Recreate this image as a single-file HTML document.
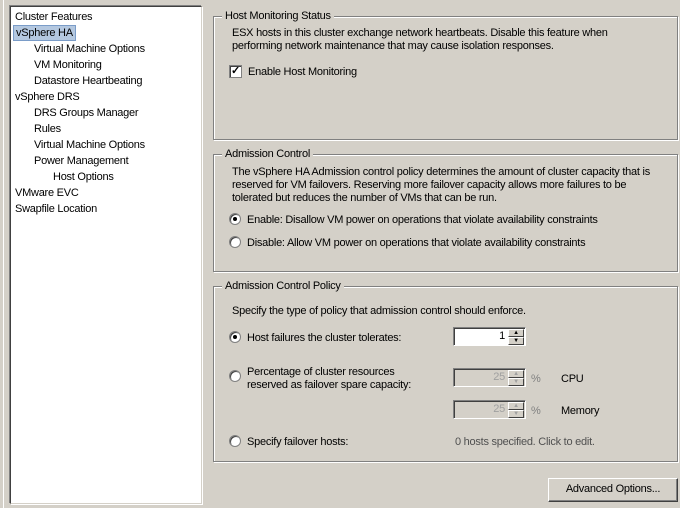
<!DOCTYPE html>
<html><head><style>
*{margin:0;padding:0;box-sizing:border-box}
body{width:680px;height:508px;background:#d4d0c8;font-family:Tahoma,"Liberation Sans",sans-serif;font-size:11px;letter-spacing:-0.25px;color:#000;position:relative;overflow:hidden}
.a{position:absolute;white-space:nowrap}
.list{position:absolute;left:10px;top:6px;width:192px;height:498px;background:#fff;border-top:1px solid #404040;border-left:1px solid #404040;border-right:1px solid #d4d0c8;border-bottom:1px solid #d4d0c8;box-shadow:-1px -1px 0 #808080, 1px 1px 0 #fff}
.list div{position:absolute;white-space:nowrap;line-height:14px}
.sel{background:#b4c8e0;border:1px solid #7a9cc8;padding:0 2px}
.gb{position:absolute;border:1px solid #808080;box-shadow:inset 1px 1px 0 #fff,1px 1px 0 #fff}
.gt{position:absolute;top:-8px;left:8px;background:#d4d0c8;padding:0 3px;line-height:14px}
.rad{position:absolute;width:12px;height:12px;border-radius:50%;background:#fff;border:1px solid #808080;box-shadow:inset 1px 1px 0 #404040}
.rad.on:after{content:"";position:absolute;left:3px;top:3px;width:4px;height:4px;border-radius:50%;background:#000}
.spin{position:absolute;height:19px;border:1px solid #808080;border-right-color:#fff;border-bottom-color:#fff;box-shadow:inset 1px 1px 0 #404040;text-align:right;padding-right:20px;line-height:17px}
.spin .b{position:absolute;right:1px;width:16px;height:8px;background:#d4d0c8;border:1px solid;border-color:#fff #404040 #404040 #fff;font-size:6px;line-height:6px;text-align:center}
.dis{background:#d4d0c8;color:#a0a0a0}
.en{background:#fff}
</style></head><body>
<div class="a" style="left:3px;top:0;width:1px;height:508px;background:#fff"></div>
<div class="list">
<div style="left:4px;top:3px">Cluster Features</div>
<div class="sel" style="left:2px;top:18px">vSphere HA</div>
<div style="left:23px;top:35px">Virtual Machine Options</div>
<div style="left:23px;top:51px">VM Monitoring</div>
<div style="left:23px;top:67px">Datastore Heartbeating</div>
<div style="left:4px;top:83px">vSphere DRS</div>
<div style="left:23px;top:99px">DRS Groups Manager</div>
<div style="left:23px;top:115px">Rules</div>
<div style="left:23px;top:131px">Virtual Machine Options</div>
<div style="left:23px;top:147px">Power Management</div>
<div style="left:42px;top:163px">Host Options</div>
<div style="left:4px;top:179px">VMware EVC</div>
<div style="left:4px;top:195px">Swapfile Location</div>
</div>

<div class="gb" style="left:213px;top:16px;width:465px;height:124px"><div class="gt">Host Monitoring Status</div></div>
<div class="a" style="left:232px;top:27px;line-height:13px">ESX hosts in this cluster exchange network heartbeats. Disable this feature when<br>performing network maintenance that may cause isolation responses.</div>
<div class="a" style="left:229px;top:65px;width:13px;height:13px;background:#fff;border:1px solid #808080;box-shadow:inset 1px 1px 0 #404040;font-size:11px;line-height:11px;text-align:center;font-weight:bold">✓</div>
<div class="a" style="left:248px;top:66px">Enable Host Monitoring</div>

<div class="gb" style="left:213px;top:154px;width:465px;height:118px"><div class="gt">Admission Control</div></div>
<div class="a" style="left:232px;top:166px;line-height:13px">The vSphere HA Admission control policy determines the amount of cluster capacity that is<br>reserved for VM failovers. Reserving more failover capacity allows more failures to be<br>tolerated but reduces the number of VMs that can be run.</div>
<div class="rad on" style="left:229px;top:213px"></div>
<div class="a" style="left:247px;top:214px">Enable: Disallow VM power on operations that violate availability constraints</div>
<div class="rad" style="left:229px;top:236px"></div>
<div class="a" style="left:247px;top:237px">Disable: Allow VM power on operations that violate availability constraints</div>

<div class="gb" style="left:213px;top:286px;width:465px;height:176px"><div class="gt">Admission Control Policy</div></div>
<div class="a" style="left:232px;top:305px">Specify the type of policy that admission control should enforce.</div>
<div class="rad on" style="left:229px;top:331px"></div>
<div class="a" style="left:247px;top:332px">Host failures the cluster tolerates:</div>
<div class="spin en" style="left:453px;top:327px;width:73px">1<div class="b" style="top:1px">▲</div><div class="b" style="top:9px">▼</div></div>
<div class="rad" style="left:229px;top:370px"></div>
<div class="a" style="left:247px;top:366px;line-height:13px">Percentage of cluster resources<br>reserved as failover spare capacity:</div>
<div class="spin dis" style="left:453px;top:368px;width:73px">25<div class="b" style="top:1px">▲</div><div class="b" style="top:9px">▼</div></div>
<div class="a" style="left:531px;top:373px;color:#808080">%</div>
<div class="a" style="left:561px;top:373px">CPU</div>
<div class="spin dis" style="left:453px;top:400px;width:73px">25<div class="b" style="top:1px">▲</div><div class="b" style="top:9px">▼</div></div>
<div class="a" style="left:531px;top:405px;color:#808080">%</div>
<div class="a" style="left:561px;top:405px">Memory</div>
<div class="rad" style="left:229px;top:435px"></div>
<div class="a" style="left:247px;top:436px">Specify failover hosts:</div>
<div class="a" style="left:455px;top:436px;color:#505050">0 hosts specified. Click to edit.</div>

<div class="a" style="left:548px;top:478px;width:130px;height:24px;border:1px solid;border-color:#fff #404040 #404040 #fff;box-shadow:inset -1px -1px 0 #808080;text-align:center;line-height:21px">Advanced Options...</div>
</body></html>
